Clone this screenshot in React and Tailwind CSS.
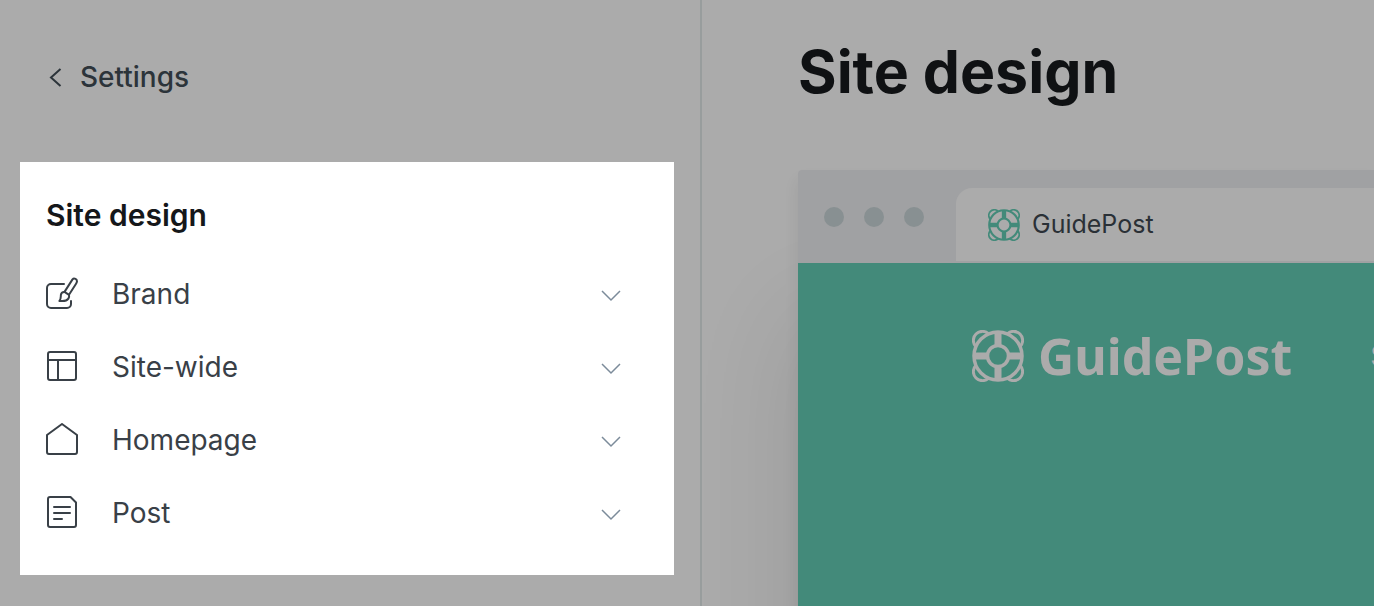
const MENU = [
  { key: "brand", label: "Brand", icon: BrandIcon },
  { key: "site-wide", label: "Site-wide", icon: LayoutIcon },
  { key: "homepage", label: "Homepage", icon: HomeIcon },
  { key: "post", label: "Post", icon: PostIcon },
];

function MenuIcon({ children }) {
  return (
    <svg
      viewBox="1 1 34 34"
      className="w-[34px] h-[34px] shrink-0"
      fill="none"
      stroke="currentColor"
      strokeWidth="2"
      strokeLinecap="round"
      strokeLinejoin="round"
      aria-hidden="true"
    >
      {children}
    </svg>
  );
}

function BrandIcon() {
  return (
    <MenuIcon>
      <path d="M19 8H6a4 4 0 0 0-4 4v16a4 4 0 0 0 4 4h16a4 4 0 0 0 4-4v-3" />
      <path d="M27.500 3.400c1.600-1.800 4.900-.1 4.400 2.400-.2.900-.5 1.500-1 2.200L24 18.800l-4.500-2.900z" />
      <path d="M19.500 15.900c-2-.1-3.400 1.200-3.600 3-.2 1.800.2 4.100-1.500 6 3.600.5 7.400.1 9-2.300.9-1.300.9-2.600.6-3.800" />
    </MenuIcon>
  );
}

function LayoutIcon() {
  return (
    <MenuIcon>
      <rect x="3" y="3" width="28" height="28" rx="2" />
      <path d="M3 11h28M13 11v20" />
    </MenuIcon>
  );
}

function HomeIcon() {
  return (
    <MenuIcon>
      <path d="M17 2l15 11v17a2 2 0 0 1-2 2H4a2 2 0 0 1-2-2V13z" />
    </MenuIcon>
  );
}

function PostIcon() {
  return (
    <MenuIcon>
      <path d="M5 2h20.500L31 7.500V30a2 2 0 0 1-2 2H5a2 2 0 0 1-2-2V4a2 2 0 0 1 2-2z" />
      <path d="M9 12h16M9 18h16M9 24h8" />
    </MenuIcon>
  );
}

function LifebuoyIcon({ className }) {
  return (
    <svg viewBox="0 0 52 52" className={className} fill="none" stroke="currentColor" aria-hidden="true">
      <circle cx="26" cy="26" r="24" strokeWidth="3.500" />
      <circle cx="26" cy="26" r="10.500" strokeWidth="3.500" />
      <path d="M26 2v13M26 37v13M2 26h13M37 26h13" strokeWidth="7" />
      <path
        d="M3.600 16.300A9 9 0 0 1 16.300 3.600M35.700 3.600A9 9 0 0 1 48.400 16.300M48.400 35.700A9 9 0 0 1 35.700 48.400M16.300 48.400A9 9 0 0 1 3.600 35.700"
        strokeWidth="3"
      />
    </svg>
  );
}

function Sidebar() {
  return (
    <aside className="w-[702px] shrink-0 border-r-2 border-[#989d9d] pl-5 pr-[26px] pt-[61px]">
      <a href="#settings" className="ml-7 flex items-center gap-4 text-[28px] leading-8 font-medium text-[#2c343a]">
        <svg viewBox="0 0 16 20" className="w-4 h-5" fill="none" stroke="currentColor" strokeWidth="2" aria-hidden="true">
          <path d="M12.500 2L3 10.500l9.500 8.500" />
        </svg>
        Settings
      </a>

      <nav className="mt-[69px] bg-white pl-[26px] pr-[51px] pt-[35px] pb-[26px]" aria-label="Site design">
        <h2 className="text-[30px] leading-9 font-semibold text-[#15171a]">Site design</h2>
        <ul className="mt-6">
          {MENU.map(({ key, label, icon: Icon }) => (
            <li key={key}>
              <button type="button" className="flex w-full h-[73px] items-center text-left text-[#394047]">
                <Icon />
                <span className="ml-8 flex-1 text-[28px] leading-8">{label}</span>
                <svg viewBox="0 0 24 16" className="w-6 h-4 text-[#7c8b9a]" fill="none" stroke="currentColor" strokeWidth="1.500" aria-hidden="true">
                  <path d="M3 5l9 9 9-9" />
                </svg>
              </button>
            </li>
          ))}
        </ul>
      </nav>
    </aside>
  );
}

function BrowserPreview() {
  return (
    <section className="mt-[62px] flex flex-1 flex-col rounded-tl-sm shadow-[0_150px_110px_rgba(0,0,0,0.11),0_10px_16px_rgba(0,0,0,0.07)]">
      <div className="flex h-[93px] items-end rounded-tl-sm bg-[#a0a1a3] pb-[2px]">
        <div className="flex w-[158px] shrink-0 gap-5 self-center pl-[26px] pt-[2px]">
          <span className="size-5 rounded-full bg-[#889092]" />
          <span className="size-5 rounded-full bg-[#889092]" />
          <span className="size-5 rounded-full bg-[#889092]" />
        </div>
        <div className="flex h-[73px] flex-1 items-center gap-3 rounded-tl-2xl bg-[#ababab] pl-8 text-[25px] text-[#2a3036]">
          <LifebuoyIcon className="size-8 text-[#438a7a]" />
          GuidePost
        </div>
      </div>
      <div className="flex flex-1 items-start bg-[#438a7a] pl-[174px] pt-[57px] text-[#ababab]">
        <div className="flex shrink-0 items-center gap-[14px] font-['Noto_Sans','Open_Sans',sans-serif] text-[50px] leading-[72px] font-bold">
          <LifebuoyIcon className="size-[52px]" />
          GuidePost
        </div>
        <span className="ml-[78px] shrink-0 pt-5 text-[28px] leading-8">S</span>
      </div>
    </section>
  );
}

export default function App() {
  return (
    <div className="flex min-h-screen overflow-hidden bg-[#ababab] font-['Inter',sans-serif]">
      <Sidebar />
      <main className="flex min-w-0 flex-1 flex-col pl-24 pt-9">
        <h1 className="text-[59px] leading-[72px] font-bold text-[#0f1113]">Site design</h1>
        <BrowserPreview />
      </main>
    </div>
  );
}
